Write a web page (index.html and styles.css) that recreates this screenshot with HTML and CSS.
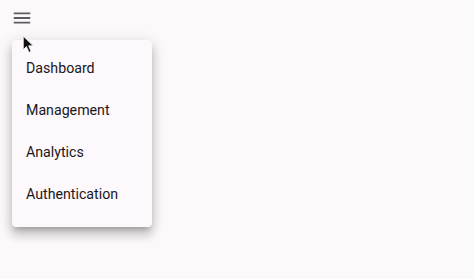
FILE: index.html
```html
<!DOCTYPE html>
<html>
<head>
<meta charset="utf-8">
<link rel="stylesheet" href="styles.css">
</head>
<body>
<div class="page">
  <header class="toolbar">
    <button class="icon-btn" aria-label="Menu">
      <svg width="22" height="22" viewBox="0 0 24 24"><path fill="#5f5b60" d="M3 18h18v-2H3v2zm0-5h18v-2H3v2zm0-7v2h18V6H3z"/></svg>
    </button>
  </header>
  <nav class="menu">
    <div class="menu-item">Dashboard</div>
    <div class="menu-item">Management</div>
    <div class="menu-item">Analytics</div>
    <div class="menu-item">Authentication</div>
  </nav>
  <svg class="cursor" width="13" height="19" viewBox="0 0 12 18"><path d="M1 1 L1 14 L4 11 L6.5 16.5 L8.5 15.6 L6.2 10.3 L10.5 10.3 Z" fill="#111" stroke="#fff" stroke-width="0.8" stroke-linejoin="round"/></svg>
</div>
</body>
</html>
```
FILE: styles.css
```css
html, body {
  margin: 0;
  padding: 0;
  background: #fcf9fb;
  font-family: Roboto, "Liberation Sans", sans-serif;
}
.page {
  position: relative;
  width: 474px;
  height: 279px;
  overflow: hidden;
}
.toolbar {
  display: flex;
  align-items: center;
  height: 30px;
  padding: 5px 0 0 11px;
  box-sizing: border-box;
}
.icon-btn {
  border: 0;
  background: none;
  padding: 0;
  margin: 0;
  width: 22px;
  height: 22px;
  display: block;
}
.icon-btn svg { display: block; }
.menu {
  margin: 10px 0 0 12px;
  width: 140px;
  padding: 7px 0 12px;
  background: #fcf8fb;
  border-radius: 4px;
  box-shadow: 0 5px 5px -3px rgba(0,0,0,0.2), 0 8px 10px 1px rgba(0,0,0,0.14), 0 3px 14px 2px rgba(0,0,0,0.12);
}
.menu-item {
  height: 42px;
  line-height: 43px;
  padding-left: 14px;
  font-size: 14.2px;
  color: #1a171b;
}
.cursor {
  position: absolute;
  left: 22px;
  top: 35px;
}
```
